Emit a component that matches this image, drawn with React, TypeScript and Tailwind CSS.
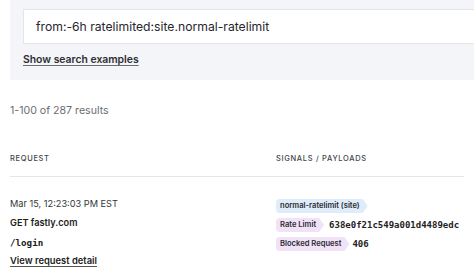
import React from "react";

function Tag({ children, color }: { children: React.ReactNode; color: "blue" | "purple" }) {
  const bg = color === "blue" ? "bg-[#deedf9]" : "bg-[#f1e2f7]";
  return (
    <span
      className={`inline-flex h-[14px] items-center whitespace-nowrap rounded-l-[4px] pl-[4px] pr-[8px] text-[7.6px] font-semibold leading-none text-[#2b2b33] ${bg} [clip-path:polygon(0_0,calc(100%-5px)_0,100%_50%,calc(100%-5px)_100%,0_100%)]`}
    >
      {children}
    </span>
  );
}

export default function App() {
  return (
    <div className="h-[279px] w-[474px] overflow-hidden bg-white font-['Inter',sans-serif] text-[#222]">
      <div className="ml-[10px] flex h-[80px] flex-col bg-[#f4f5f8] pl-[13px] pt-[9px]">
        <div className="flex h-[35px] items-center border border-r-0 border-[#e3e5ea] bg-white pl-[12px] pt-[1px] text-[12.2px] text-[#26262c]">
          from:-6h ratelimited:site.normal-ratelimit
        </div>
        <div className="mt-[11px] text-[10.4px] font-semibold leading-none text-[#2e2e33] underline decoration-[#6a6a70] underline-offset-2">
          Show search examples
        </div>
      </div>
      <div className="px-[10px]">
        <div className="mt-[26px] text-[10.6px] leading-none text-[#6b6d74]">1-100 of 287 results</div>
        <div className="mt-[38px] grid grid-cols-[266px_1fr] border-b border-[#e4e5e9] pb-[14px] text-[7.5px] font-medium uppercase leading-none tracking-[0.09em] text-[#45464c]">
          <div>Request</div>
          <div>Signals / Payloads</div>
        </div>
        <div className="grid grid-cols-[266px_1fr]">
          <div className="flex flex-col pt-[22px]">
            <div className="text-[9.2px] leading-none text-[#34353a]">Mar 15, 12:23:03 PM EST</div>
            <div className="mt-[10px] text-[9.2px] font-semibold leading-none text-[#222]">GET fastly.com</div>
            <div className="mt-[10px] font-['DejaVu_Sans_Mono',monospace] text-[9.2px] font-bold leading-none text-[#222]">/login</div>
            <div className="mt-[9px] text-[9.4px] font-semibold leading-none text-[#222] underline decoration-[#555] underline-offset-2">
              View request detail
            </div>
          </div>
          <div className="flex flex-col gap-[5px] pt-[22px]">
            <div className="flex items-center">
              <Tag color="blue">normal-ratelimit (site)</Tag>
            </div>
            <div className="flex items-center gap-[5px]">
              <Tag color="purple">Rate Limit</Tag>
              <span className="font-['DejaVu_Sans_Mono',monospace] text-[9px] font-bold leading-none text-[#222]">638e0f21c549a001d4489edc</span>
            </div>
            <div className="flex items-center gap-[3px]">
              <Tag color="purple">Blocked Request</Tag>
              <span className="font-['DejaVu_Sans_Mono',monospace] text-[9px] font-bold leading-none text-[#222]">406</span>
            </div>
          </div>
        </div>
      </div>
    </div>
  );
}
